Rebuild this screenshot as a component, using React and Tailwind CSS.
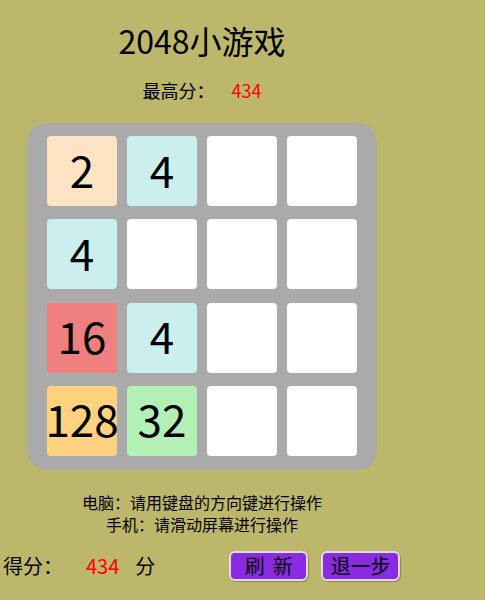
import React from 'react';

// 2048 小游戏 —— 静态棋盘
const TILE_BG = {
  2: 'bg-[#fbe3c3]',
  4: 'bg-[#cbefef]',
  16: 'bg-[#f08080]',
  32: 'bg-[#b3f0b5]',
  128: 'bg-[#ffd27f]',
};

const BOARD = [
  [2, 4, 0, 0],
  [4, 0, 0, 0],
  [16, 4, 0, 0],
  [128, 32, 0, 0],
];

function Tile({ value }) {
  return (
    <div
      className={`h-[70px] w-[70px] rounded-[4px] flex items-center justify-center pb-[5px] text-[44px] leading-none text-black ${
        value ? TILE_BG[value] : 'bg-white'
      }`}
    >
      {value ? value : ''}
    </div>
  );
}

export default function App() {
  const best = 434;
  const score = 434;

  return (
    <div className="min-h-screen w-full bg-[#bdb76b] font-['Noto_Sans_CJK_SC',sans-serif] text-black">
      <div className="w-[404px] text-center pt-[17px]">
        <h1 className="text-[32px] leading-[46px]">2048小游戏</h1>

        <p className="mt-[14px] text-[18px] leading-[26px]">
          最高分：<span className="ml-[17px] text-[#ff0000]">{best}</span>
        </p>

        {/* 棋盘 */}
        <div className="mt-[20px] ml-[27px] w-[350px] rounded-[20px] bg-[#aaaaaa] pl-[20px] pt-[13px] pb-[14px]">
          <div className="grid grid-cols-[repeat(4,70px)] gap-x-[10px] gap-y-[13.33px]">
            {BOARD.flat().map((v, i) => (
              <Tile key={i} value={v} />
            ))}
          </div>
        </div>

        <div className="mt-[21px] text-[16px] leading-[22px]">
          <p>电脑：请用键盘的方向键进行操作</p>
          <p>手机：请滑动屏幕进行操作</p>
        </div>
      </div>

      {/* 得分 + 按钮 */}
      <div className="mt-[16px] flex items-center pl-[3px]">
        <span className="text-[20px] leading-none">得分：</span>
        <span className="ml-[23px] text-[20px] leading-none text-[#ff0000]">{score}</span>
        <span className="ml-[16px] text-[20px] leading-none">分</span>
        <button className="ml-[74px] w-[79px] h-[30px] rounded-[6px] border-2 border-[#dddddd] bg-[#8a2be2] text-[20px] leading-none text-black shadow-[1px_1px_1px_rgba(0,0,0,0.25)]">
          刷<span className="ml-[8px]">新</span>
        </button>
        <button className="ml-[13px] w-[79px] h-[30px] rounded-[6px] border-2 border-[#dddddd] bg-[#8a2be2] text-[20px] leading-none text-black shadow-[1px_1px_1px_rgba(0,0,0,0.25)]">
          退一步
        </button>
      </div>
    </div>
  );
}
